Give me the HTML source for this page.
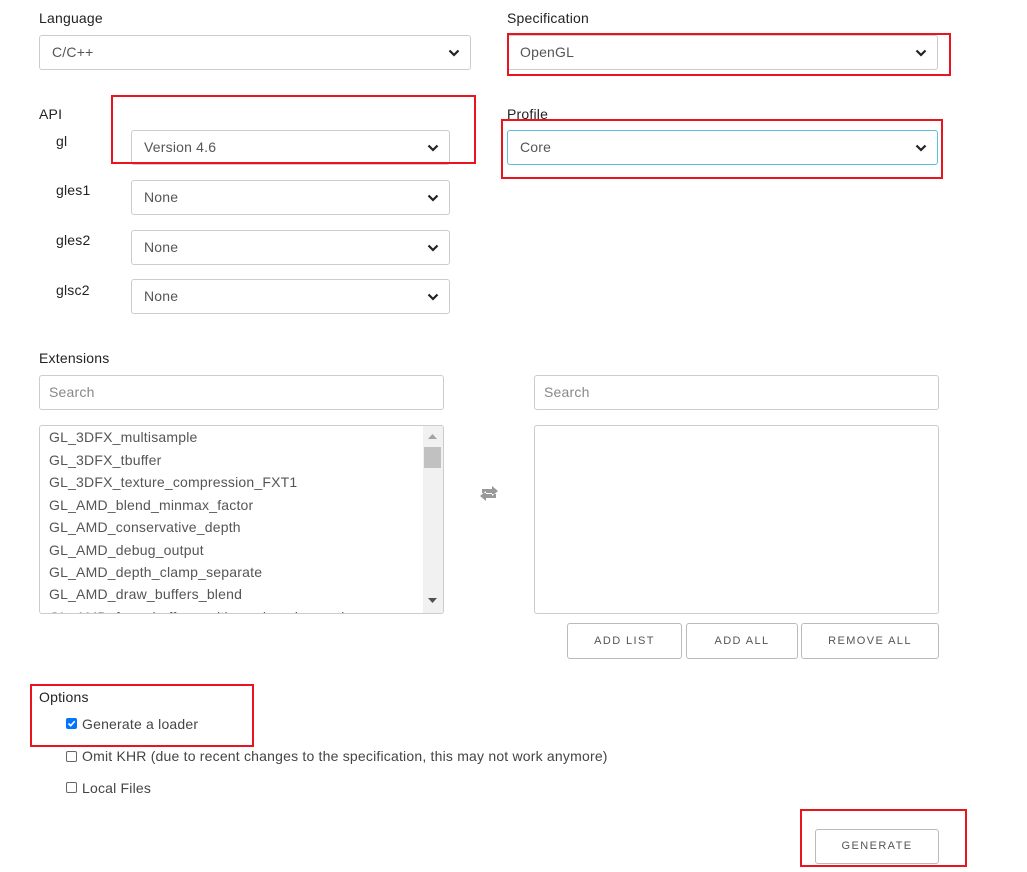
<!DOCTYPE html>
<html><head><meta charset="utf-8"><style>
*{box-sizing:border-box;margin:0;padding:0}
body{width:1027px;height:872px;background:#fff;font-family:"Liberation Sans",sans-serif;position:relative;overflow:hidden;color:#222}
.a{position:absolute}
.lbl{position:absolute;font-size:14px;color:#222;letter-spacing:0.2px}
.sel{position:absolute;border:1px solid #ccc;border-radius:3px;height:35px;font-size:14px;color:#555;padding:0 0 0 12px;line-height:33px;background:#fff;letter-spacing:0.2px}
.sel svg{position:absolute;right:10px;top:13px}
.red{position:absolute;border:2px solid #e8141e}
.inp{position:absolute;border:1px solid #ccc;border-radius:3px;height:35px;font-size:14px;color:#888;padding-left:9px;line-height:33px;letter-spacing:0.2px}
.box{position:absolute;border:1px solid #ccc;border-radius:3px;background:#fff;overflow:hidden}
.it{position:absolute;left:9px;font-size:14px;color:#555;white-space:nowrap;letter-spacing:0.2px}
.btn{position:absolute;border:1px solid #bbb;border-radius:3px;height:36px;font-size:11px;letter-spacing:1.4px;color:#555;text-align:center;line-height:34px}
.cb{position:absolute;width:11px;height:11px;border:1px solid #666;border-radius:2px;background:#fff}
.ct{position:absolute;font-size:14px;color:#444;letter-spacing:0.2px;white-space:nowrap}
</style></head><body>
<div class="lbl" style="left:39px;top:10px">Language</div>
<div class="sel" style="left:39px;top:35px;width:432px">C/C++<svg width="12" height="8"><path d="M1.5 1.5l4.5 4.5 4.5-4.5" stroke="#222" stroke-width="2.2" fill="none"/></svg></div>
<div class="lbl" style="left:507px;top:10px">Specification</div>
<div class="sel" style="left:507px;top:35px;width:431px">OpenGL<svg width="12" height="8"><path d="M1.5 1.5l4.5 4.5 4.5-4.5" stroke="#222" stroke-width="2.2" fill="none"/></svg></div>
<div class="red" style="left:507px;top:33px;width:444px;height:43px"></div>

<div class="lbl" style="left:39px;top:106px">API</div>
<div class="lbl" style="left:56px;top:133px">gl</div>
<div class="sel" style="left:131px;top:130px;width:319px">Version 4.6<svg width="12" height="8"><path d="M1.5 1.5l4.5 4.5 4.5-4.5" stroke="#222" stroke-width="2.2" fill="none"/></svg></div>
<div class="red" style="left:111px;top:95px;width:365px;height:69px"></div>
<div class="lbl" style="left:56px;top:182px">gles1</div>
<div class="sel" style="left:131px;top:180px;width:319px">None<svg width="12" height="8"><path d="M1.5 1.5l4.5 4.5 4.5-4.5" stroke="#222" stroke-width="2.2" fill="none"/></svg></div>
<div class="lbl" style="left:56px;top:232px">gles2</div>
<div class="sel" style="left:131px;top:230px;width:319px">None<svg width="12" height="8"><path d="M1.5 1.5l4.5 4.5 4.5-4.5" stroke="#222" stroke-width="2.2" fill="none"/></svg></div>
<div class="lbl" style="left:56px;top:282px">glsc2</div>
<div class="sel" style="left:131px;top:279px;width:319px">None<svg width="12" height="8"><path d="M1.5 1.5l4.5 4.5 4.5-4.5" stroke="#222" stroke-width="2.2" fill="none"/></svg></div>

<div class="lbl" style="left:507px;top:106px">Profile</div>
<div class="sel" style="left:507px;top:130px;width:431px;border-color:#5bc0de">Core<svg width="12" height="8"><path d="M1.5 1.5l4.5 4.5 4.5-4.5" stroke="#222" stroke-width="2.2" fill="none"/></svg></div>
<div class="red" style="left:501px;top:119px;width:442px;height:60px"></div>

<div class="lbl" style="left:39px;top:350px">Extensions</div>
<div class="inp" style="left:39px;top:375px;width:405px">Search</div>
<div class="inp" style="left:534px;top:375px;width:405px">Search</div>
<div class="box" style="left:39px;top:425px;width:405px;height:189px">
<div class="it" style="top:3px">GL_3DFX_multisample</div>
<div class="it" style="top:26px">GL_3DFX_tbuffer</div>
<div class="it" style="top:48px">GL_3DFX_texture_compression_FXT1</div>
<div class="it" style="top:71px">GL_AMD_blend_minmax_factor</div>
<div class="it" style="top:93px">GL_AMD_conservative_depth</div>
<div class="it" style="top:116px">GL_AMD_debug_output</div>
<div class="it" style="top:138px">GL_AMD_depth_clamp_separate</div>
<div class="it" style="top:160px">GL_AMD_draw_buffers_blend</div>
<div class="it" style="top:183px">GL_AMD_framebuffer_multisample_advanced</div>
<div class="a" style="left:383px;top:0;width:21px;height:187px;background:#f1f1f1"></div>
<div class="a" style="left:384px;top:21px;width:17px;height:21px;background:#c1c1c1"></div>
<svg class="a" style="left:388px;top:8px" width="9" height="5"><path d="M0 5L4.5 0 9 5z" fill="#a3a3a3"/></svg>
<svg class="a" style="left:388px;top:172px" width="9" height="5"><path d="M0 0L4.5 5 9 0z" fill="#505050"/></svg>
</div>
<svg class="a" style="left:478px;top:485px" width="22" height="17"><path d="M4 4h10V1l6 5-6 5V8H4zM18 9H8V6l-6 5 6 5v-3h10z" fill="#999"/></svg>
<div class="box" style="left:534px;top:425px;width:405px;height:189px"></div>
<div class="btn" style="left:567px;top:623px;width:115px">ADD LIST</div>
<div class="btn" style="left:686px;top:623px;width:112px">ADD ALL</div>
<div class="btn" style="left:801px;top:623px;width:138px">REMOVE ALL</div>

<div class="lbl" style="left:39px;top:689px">Options</div>
<div class="cb" style="left:66px;top:718px;background:#0075ff;border-color:#0075ff"><svg width="11" height="11" style="position:absolute;left:-1px;top:-1px"><path d="M2.5 5.5l2.2 2.2 4-4.5" stroke="#fff" stroke-width="1.6" fill="none"/></svg></div>
<div class="ct" style="left:82px;top:716px">Generate a loader</div>
<div class="red" style="left:30px;top:684px;width:224px;height:63px"></div>
<div class="cb" style="left:66px;top:751px"></div>
<div class="ct" style="left:82px;top:748px">Omit KHR (due to recent changes to the specification, this may not work anymore)</div>
<div class="cb" style="left:66px;top:782px"></div>
<div class="ct" style="left:82px;top:780px">Local Files</div>

<div class="btn" style="left:815px;top:829px;width:124px;height:35px;line-height:33px">GENERATE</div>
<div class="red" style="left:800px;top:809px;width:167px;height:58px"></div>
</body></html>
